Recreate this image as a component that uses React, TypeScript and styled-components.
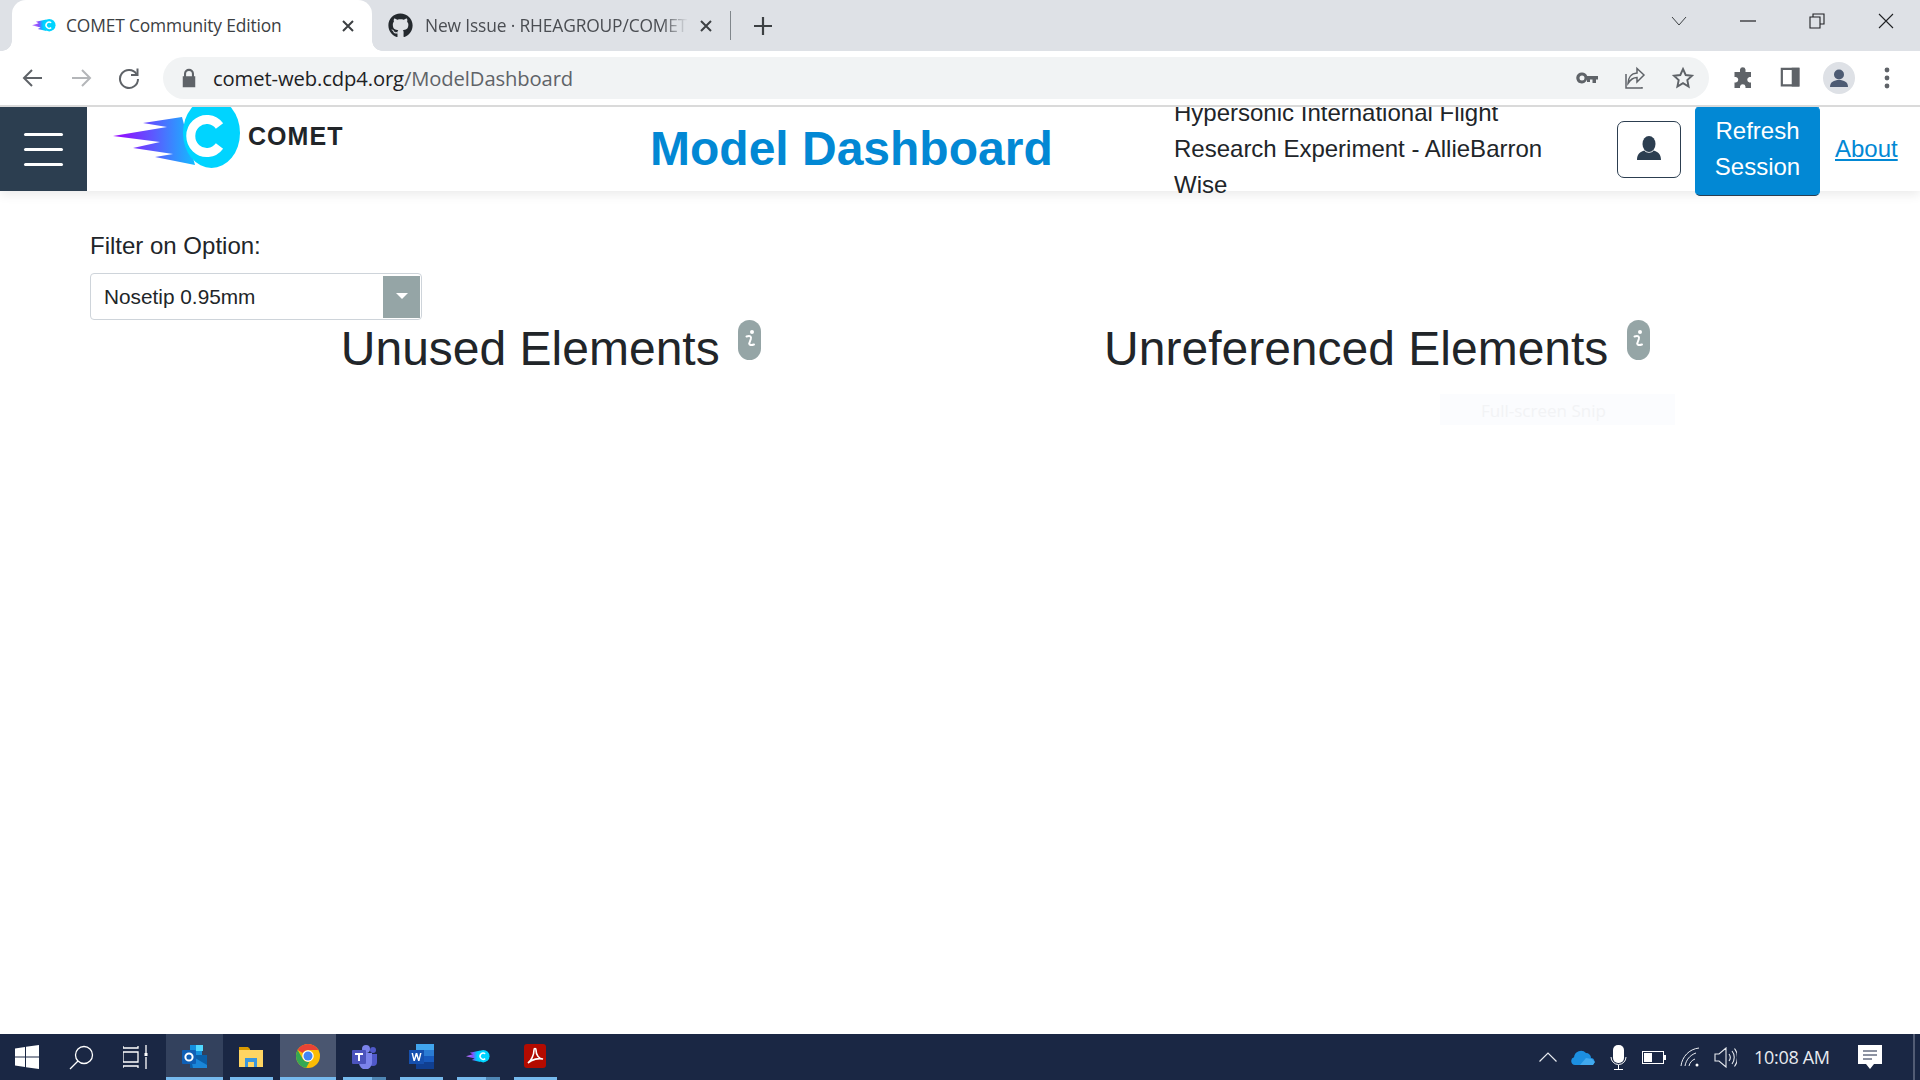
import React from "react";
import styled, { createGlobalStyle } from "styled-components";
import { FaGithub } from "react-icons/fa";

const Global = createGlobalStyle`
  html, body { margin: 0; padding: 0; background: #fff; }
  body { font-family: "Liberation Sans", Arial, sans-serif; color: #212529; }
  * { box-sizing: border-box; }
`;
const Screen = styled.div`display:flex;flex-direction:column;width:1920px;height:1080px;overflow:hidden;position:relative;`;
const Chrome = styled.header`flex:none;position:relative;z-index:5;background:#fff;font-family:"Open Sans","Noto Sans",sans-serif;`;
const TabStrip = styled.div`display:flex;align-items:stretch;height:51px;background:#dee1e6;padding-left:12px;`;
const ActiveTab = styled.div`
  position:relative;display:flex;align-items:center;width:360px;background:#fff;border-radius:14px 14px 0 0;padding:0 17px 0 20px;
  &::before,&::after{content:"";position:absolute;bottom:0;width:10px;height:10px;background:radial-gradient(circle at var(--cx) 0,#dee1e6 9.5px,#fff 10px);}
  &::before{left:-10px;--cx:0;}
  &::after{right:-10px;--cx:100%;}
`;
const InactiveTab = styled.div`display:flex;align-items:center;width:358px;padding:0 17px 0 16px;`;
const TabTitle = styled.span<{ $fade?: boolean }>`
  flex:1;margin:0 ${p => (p.$fade ? "11px" : "0")} 2px ${p => (p.$fade ? "12px" : "10px")};font-size:17.4px;letter-spacing:-.15px;white-space:nowrap;color:${p => (p.$fade ? "#4a4d52" : "#3c4043")};
  ${p => p.$fade && "-webkit-mask-image:linear-gradient(90deg,#000 90%,transparent 100%);mask-image:linear-gradient(90deg,#000 90%,transparent 100%);"}
`;
const TabSeparator = styled.div`width:1px;height:29px;background:#80868b;align-self:center;`;
const PlusSlot = styled.div`width:64px;display:flex;align-items:center;justify-content:center;`;
const WindowControls = styled.div`margin-left:auto;display:flex;align-items:flex-start;`;
const WinBtn = styled.div<{ $w: number }>`width:${p => p.$w}px;height:42px;display:flex;align-items:center;justify-content:center;`;
const Toolbar = styled.div`display:flex;align-items:center;height:56px;padding:0 9px 0 9px;background:#fff;border-bottom:2px solid #dadada;`;
const ToolBtn = styled.div`flex:none;width:48px;height:42px;display:flex;align-items:center;justify-content:center;`;
const Omnibox = styled.div`flex:1;height:42px;margin:0 10px 0 10px;padding:0 2px 0 16px;display:flex;align-items:center;background:#f1f3f4;border-radius:21px;`;
const Url = styled.div`flex:1;margin-left:14px;font-size:20.2px;letter-spacing:-.1px;color:#202124;white-space:nowrap;`;
const UrlPath = styled.span`color:#5f6368;`;

const Page = styled.main`flex:1;position:relative;min-height:0;background:#fff;`;
const Nav = styled.nav`display:flex;align-items:center;height:84px;background:#fff;box-shadow:0 4px 10px rgba(0,0,0,.08);position:relative;`;
const MenuBtn = styled.button`flex:none;width:87px;height:84px;border:0;padding:0;background:#2c3e50;display:flex;flex-direction:column;gap:12px;align-items:center;justify-content:center;`;
const Bar = styled.span`width:39px;height:3px;border-radius:2px;background:#fff;`;
const Brand = styled.div`flex:none;width:563px;height:84px;padding-left:26px;display:flex;align-items:flex-start;overflow:hidden;`;
const BrandName = styled.span`margin:11px 0 0 1px;font-size:25px;line-height:36px;font-weight:700;letter-spacing:1.05px;color:#212529;`;
const Title = styled.h1`flex:none;width:524px;margin:0;font-size:48px;line-height:58px;font-weight:700;color:#0288d4;white-space:nowrap;`;
const ProjectName = styled.div`flex:none;width:397px;height:108px;margin-top:-1px;font-size:24px;line-height:36px;color:#212529;`;
const UserBtn = styled.button`flex:none;width:64px;height:57px;margin:0 0 0 46px;padding:0 0 3px;background:#fff;border:1px solid #2c3e50;border-radius:7px;display:flex;align-items:center;justify-content:center;`;
const RefreshBtn = styled.button`flex:none;width:125px;height:90px;margin:4px 0 0 14px;padding:4px 16px 8px;background:#0288d4;border:1px solid #2c3e50;border-color:#0288d4 #0288d4 #2c3e50;border-radius:5px;color:#fff;font:24px/36px "Liberation Sans",Arial,sans-serif;`;
const AboutLink = styled.a`flex:none;margin-left:15px;font-size:24px;line-height:36px;color:#0288d4;text-decoration:underline;`;
const Filter = styled.section`padding:37px 0 0 90px;`;
const FilterLabel = styled.label`display:block;font-size:24px;line-height:36px;margin-bottom:9px;`;
const Select = styled.div`display:flex;width:332px;height:47px;padding:2px 1px 1px 0;border:1px solid #ced4da;border-radius:4px;background:#fff;`;
const SelectValue = styled.span`flex:1;padding-left:13px;font-size:20.8px;line-height:41px;`;
const SelectArrow = styled.span`width:37px;background:#95a5a6;display:flex;align-items:center;justify-content:center;`;
const Caret = styled.i`width:0;height:0;margin-bottom:3px;border:6px solid transparent;border-top-color:#fff;border-bottom:0;`;
const Columns = styled.section`display:grid;grid-template-columns:826px 826px;padding-left:138px;`;
const Column = styled.div`display:flex;justify-content:center;align-items:flex-start;gap:18.5px;`;
const Heading = styled.h2`margin:0;font-size:48px;line-height:58px;font-weight:400;color:#212529;white-space:nowrap;`;
const InfoBadge = styled.span`width:23px;height:40px;border-radius:12px;background:#95a5a6;display:flex;align-items:center;justify-content:center;`;
const Ghost = styled.div`position:absolute;left:1440px;top:287px;width:235px;height:31px;padding-left:41px;background:#fbfcfe;color:#f2f3f5;font:17px/33px "Open Sans",sans-serif;`;

const Taskbar = styled.footer`flex:none;position:relative;z-index:5;height:46px;display:flex;align-items:stretch;background:#1a2744;`;
const SysBtn = styled.div`width:54px;display:flex;align-items:center;justify-content:center;`;
const AppGap = styled.div`width:4px;`;
const AppCell = styled.div<{ $active?: boolean; $open?: boolean }>`
  position:relative;width:56.8px;display:flex;align-items:center;justify-content:center;padding-bottom:2px;
  background:${p => (p.$active ? "#4a5670" : p.$open ? "#33415d" : "transparent")};
`;
const Underline = styled.span<{ $full?: boolean; $stack?: boolean }>`
  position:absolute;bottom:0;height:3px;left:${p => (p.$full ? 0 : "7px")};right:${p => (p.$full ? 0 : "7px")};
  background:${p => (p.$stack ? "linear-gradient(90deg,#76b9ed 0 68%,#4f86b4 68% 100%)" : "#76b9ed")};
`;
const Tray = styled.div`margin-left:auto;display:flex;align-items:stretch;padding-right:5px;`;
const TraySlot = styled.div`width:35.5px;display:flex;align-items:center;justify-content:center;`;
const Clock = styled.div`width:76px;margin:0 13px 0 11px;display:flex;align-items:center;white-space:nowrap;color:#e8ebf0;font:18px "Open Sans",sans-serif;letter-spacing:-.3px;`;
const Notify = styled.div`width:54px;display:flex;align-items:center;justify-content:center;`;
const ShowDesktop = styled.div`width:18px;border-right:2px solid #525c74;`;

const Grey = "#5f6368";
const CometMini = ({ s = 26, id }: { s?: number; id: string }) => (
  <svg width={s} height={s * 0.6} viewBox="0 0 50 30">
    <defs><linearGradient id={id} x1="0" x2="1"><stop offset="0" stopColor="#c080ff" /><stop offset=".45" stopColor="#8a4cff" /><stop offset=".75" stopColor="#00c8ff" /></linearGradient></defs>
    <path d="M0 15 L14 11 L8 8 L30 3 L30 27 L12 23 L18 20 Z" fill={`url(#${id})`} />
    <circle cx="36" cy="15" r="13" fill="#00d4ff" />
    <path d="M40 10 A6.5 6.5 0 1 0 40 20" fill="none" stroke="#fff" strokeWidth="3" />
  </svg>
);
const Logo = () => (
  <svg width="134" height="84" viewBox="113 107 134 84">
    <defs><linearGradient id="lg" x1="113" x2="205" y1="0" y2="0" gradientUnits="userSpaceOnUse"><stop offset="0" stopColor="#9c00ff" /><stop offset=".45" stopColor="#5a5cff" /><stop offset="1" stopColor="#00d4ff" /></linearGradient></defs>
    <path d="M113 136 L167 127 L143 123 L182 117 L195 165 L155 157 L173 154 L133 148 L160 142 Z" fill="url(#lg)" />
    <ellipse cx="211.5" cy="133" rx="28.5" ry="35" fill="#00d4ff" />
    <path d="M219.5 126 A16 16.5 0 1 0 219.5 146" fill="none" stroke="#fff" strokeWidth="9" />
  </svg>
);
const InfoGlyph = () => (
  <svg width="12" height="22" viewBox="0 0 12 22" fill="none">
    <circle cx="8" cy="3" r="2" fill="#fff" />
    <path d="M2.500 7.500Q8 6 6.800 10L5.200 14.500Q5.500 16.800 10 15.500" stroke="#fff" strokeWidth="2" strokeLinecap="round" />
  </svg>
);
const Stroke = ({ w = 24, h = 24, vb = "0 0 24 24", c = Grey, sw = 2, children }: any) => (
  <svg width={w} height={h} viewBox={vb} fill="none" stroke={c} strokeWidth={sw}>{children}</svg>
);
const Fill = ({ w = 24, h = 24, vb = "0 0 24 24", c = Grey, children }: any) => (
  <svg width={w} height={h} viewBox={vb} fill={c}>{children}</svg>
);

const apps = [
  { key: "o", open: true, full: true, icon: (
    <svg width="25" height="25" viewBox="0 0 25 25"><path d="M8 1h12v12H8z" fill="#1490df" /><path d="M14 1h7v6h-7z" fill="#50d9ff" /><path d="M8 11h17v13H8z" fill="#0a5ea8" /><path d="M8 11l17 10v3H11z" fill="#1a86d8" /><rect y="6" width="14" height="14" rx="1" fill="#0f5fb5" /><circle cx="7" cy="13" r="3.6" fill="none" stroke="#fff" strokeWidth="2" /></svg>) },
  { key: "f", icon: (
    <svg width="24" height="22" viewBox="0 0 24 22"><path d="M0 2h9l2 2v4H0z" fill="#d99a00" /><path d="M0 5h24v17H0z" fill="#ffd562" /><path d="M6 13h12v9h-3v-5H9v5H6z" fill="#3a96dd" /></svg>) },
  { key: "c", active: true, full: true, icon: (
    <svg width="24" height="24" viewBox="0 0 48 48"><circle cx="24" cy="24" r="24" fill="#fbbc04" /><path d="M24 0a24 24 0 0 1 20.8 12H24a12 12 0 0 0-10.4 6L3.2 12A24 24 0 0 1 24 0z" fill="#ea4335" /><path d="M3.2 12l10.4 18A12 12 0 0 0 27 35.6L20.4 47.7A24 24 0 0 1 3.2 12z" fill="#34a853" /><circle cx="24" cy="24" r="11.5" fill="#fff" /><circle cx="24" cy="24" r="9" fill="#4285f4" /></svg>) },
  { key: "t", stack: true, icon: (
    <svg width="25" height="25" viewBox="0 0 25 25"><circle cx="14" cy="5" r="4" fill="#7b83eb" /><circle cx="21" cy="6" r="3" fill="#5059c9" /><path d="M17 10h8v8a4 4 0 0 1-8 0z" fill="#5059c9" /><path d="M7 9h13v10a6 6 0 0 1-13 0z" fill="#7b83eb" /><rect y="6" width="14" height="14" rx="1" fill="#4b53bc" /><path d="M3 9h8v2H8v6H6v-6H3z" fill="#fff" /></svg>) },
  { key: "w", icon: (
    <svg width="25" height="25" viewBox="0 0 25 25"><path d="M7 0h18v25H7z" fill="#185abd" /><path d="M7 0h18v6H7z" fill="#41a5ee" /><path d="M7 6h18v6H7z" fill="#2b7cd3" /><path d="M7 18h18v7H7z" fill="#103f91" /><rect y="6" width="15" height="14" fill="#1650ae" /><path d="M2.5 9l2 8h1.4l1.6-5 1.6 5h1.4l2-8h-1.5l-1.2 5.5L8.3 9H6.700l-1.500 5.500L4 9z" fill="#fff" /></svg>) },
  { key: "m", stack: true, icon: <CometMini s={24} id="cmtask" /> },
  { key: "a", icon: (
    <svg width="22" height="24" viewBox="0 0 22 24"><rect width="22" height="24" rx="3" fill="#b30b00" /><path d="M4 19c3-2 6-8 6-13 0-2 2-2 2 0 0 5 3 9 7 9-4-1-11 0-15 4z" fill="none" stroke="#fff" strokeWidth="1.6" /></svg>) },
];

export default function App() {
  return (
    <Screen>
      <Global />
      <Chrome>
        <TabStrip>
          <ActiveTab>
            <CometMini s={24} id="cmtab" />
            <TabTitle>COMET Community Edition</TabTitle>
            <Stroke w={14} h={14} vb="0 0 14 14" c="#3c4043" sw={2}><path d="M2 2l10 10M12 2L2 12" /></Stroke>
          </ActiveTab>
          <InactiveTab>
            <FaGithub size={25} color="#24292e" />
            <TabTitle $fade>New Issue · RHEAGROUP/COMET</TabTitle>
            <Stroke w={14} h={14} vb="0 0 14 14" c="#3c4043" sw={2}><path d="M2 2l10 10M12 2L2 12" /></Stroke>
          </InactiveTab>
          <TabSeparator />
          <PlusSlot><Stroke w={20} h={20} vb="0 0 20 20" c="#3c4043" sw={2.2}><path d="M10 1v18M1 10h18" /></Stroke></PlusSlot>
          <WindowControls>
            <WinBtn $w={68}><Stroke w={16} h={10} vb="0 0 16 10" c="#3c4043" sw={1}><path d="M1 1l7 8 7-8" /></Stroke></WinBtn>
            <WinBtn $w={69}><Stroke w={16} h={2} vb="0 0 16 2" c="#202124" sw={1.2}><path d="M0 1h16" /></Stroke></WinBtn>
            <WinBtn $w={69}><Stroke w={16} h={16} vb="0 0 16 16" c="#202124" sw={1.1}><path d="M1 4h10v11H1zM4 4V1h11v10h-4" /></Stroke></WinBtn>
            <WinBtn $w={69}><Stroke w={16} h={16} vb="0 0 16 16" c="#202124" sw={1.1}><path d="M1 1l14 14M15 1L1 15" /></Stroke></WinBtn>
          </WindowControls>
        </TabStrip>
        <Toolbar>
          <ToolBtn><Stroke c="#5f6368"><path d="M21 12H4M11 4l-8 8 8 8" /></Stroke></ToolBtn>
          <ToolBtn><Stroke c="#b4b6b9"><path d="M3 12h17M13 4l8 8-8 8" /></Stroke></ToolBtn>
          <ToolBtn><Stroke c="#5f6368"><path d="M19.5 8A9 9 0 1 0 21 13" /><path d="M20.5 2.5V9H14" fill="none" /></Stroke></ToolBtn>
          <Omnibox>
            <Fill w={20} h={20}><path d="M6 10V7a6 6 0 0 1 12 0v3h1.5v13h-15V10zm2.5 0h7V7a3.5 3.5 0 0 0-7 0z" /></Fill>
            <Url>comet-web.cdp4.org<UrlPath>/ModelDashboard</UrlPath></Url>
            <ToolBtn><Fill w={24} h={24}><path fillRule="evenodd" d="M7 6.5a5.5 5.5 0 0 1 5.2 3.5H23v3.5h-2V17h-3.5v-3.5H15V16h-3v-2.4A5.5 5.5 0 1 1 7 6.5zm0 3a2.5 2.5 0 1 0 0 5 2.5 2.5 0 0 0 0-5z" /></Fill></ToolBtn>
            <ToolBtn><Stroke c="#5f6368" sw={1.5}><path d="M21 9l-7-6.5V7C8 7.5 5 12 5 17.5 7.5 13.500 10 11.500 14 11.500V16z" /><path d="M3 8v14h16v-1" /></Stroke></ToolBtn>
            <ToolBtn><Stroke c="#5f6368" sw={1.9}><path d="M12 3l2.7 6 6.300.7-4.700 4.300 1.300 6.500L12 17.200 6.400 20.500l1.300-6.500L3 9.700 9.300 9z" /></Stroke></ToolBtn>
          </Omnibox>
          <ToolBtn><Fill w={24} h={24}><path d="M9 3.500a2.800 2.800 0 0 1 5.500 0V6H20v5h-1.500a2.800 2.800 0 0 0 0 5.500H20V22h-5.500v-1.500a2.800 2.800 0 0 0-5.500 0V22H3.500v-5.500H5a2.800 2.800 0 0 0 0-5.500H3.500V6H9z" /></Fill></ToolBtn>
          <ToolBtn><Stroke c="#5f6368" sw={2.4} w={22} h={22}><path d="M2 2h18v18H2z" /><path d="M14 2h6v18h-6z" fill="#5f6368" /></Stroke></ToolBtn>
          <ToolBtn>
            <svg width="32" height="32" viewBox="0 0 32 32"><circle cx="16" cy="16" r="16" fill="#dee1e6" /><circle cx="16" cy="12.500" r="5" fill="#4d5b73" /><path d="M7 25c0-5 4-7 9-7s9 2 9 7z" fill="#4d5b73" /></svg>
          </ToolBtn>
          <ToolBtn><Fill w={6} h={22} vb="0 0 6 22"><circle cx="3" cy="3" r="2.400" /><circle cx="3" cy="11" r="2.400" /><circle cx="3" cy="19" r="2.400" /></Fill></ToolBtn>
        </Toolbar>
      </Chrome>
      <Page>
        <Nav>
          <MenuBtn aria-label="menu"><Bar /><Bar /><Bar /></MenuBtn>
          <Brand><Logo /><BrandName>COMET</BrandName></Brand>
          <Title>Model Dashboard</Title>
          <ProjectName>Hypersonic International Flight Research Experiment - AllieBarron Wise</ProjectName>
          <UserBtn aria-label="user">
            <Fill w={24} h={24} c="#2c3e50"><ellipse cx="12" cy="8" rx="6.500" ry="8" /><path d="M0 24C0 18 3 16 7.500 14.500 9 17.500 15 17.500 16.500 14.500 21 16 24 18 24 24Z" /></Fill>
          </UserBtn>
          <RefreshBtn>Refresh Session</RefreshBtn>
          <AboutLink href="#">About</AboutLink>
        </Nav>
        <Filter>
          <FilterLabel>Filter on Option:</FilterLabel>
          <Select><SelectValue>Nosetip 0.95mm</SelectValue><SelectArrow><Caret /></SelectArrow></Select>
        </Filter>
        <Columns>
          <Column><Heading>Unused Elements</Heading><InfoBadge><InfoGlyph /></InfoBadge></Column>
          <Column><Heading>Unreferenced Elements</Heading><InfoBadge><InfoGlyph /></InfoBadge></Column>
        </Columns>
        <Ghost>Full-screen Snip</Ghost>
      </Page>
      <Taskbar>
        <SysBtn><Fill w={24} h={24} c="#fff"><path d="M0 3.500L10 2v9.500H0zM11 1.800L24 0v11.500H11zM0 12.500h10V22L0 20.500zM11 12.500h13V24l-13-1.800z" /></Fill></SysBtn>
        <SysBtn><Stroke w={25} h={25} vb="0 0 25 25" c="#fff" sw={1.3}><circle cx="15" cy="10" r="8.500" /><path d="M9 16L1 24" /></Stroke></SysBtn>
        <SysBtn><Stroke w={25} h={24} vb="0 0 25 24" c="#fff" sw={1.300}><path d="M0 1v2h15V1M0 7h15v10H0zM0 23v-2h15v2M23 0v8M23 12v12" /><rect x="21.500" y="8" width="3" height="3" fill="#fff" stroke="none" /></Stroke></SysBtn>
        <AppGap />
        {apps.map(a => (
          <AppCell key={a.key} $active={a.active} $open={a.open}>
            {a.icon}
            <Underline $full={a.full} $stack={a.stack} />
          </AppCell>
        ))}
        <Tray>
          <TraySlot><Stroke w={18} h={10} vb="0 0 18 10" c="#e8ebf0" sw={1.200}><path d="M0.500 9.500L9 1l8.500 8.500" /></Stroke></TraySlot>
          <TraySlot><svg width="24" height="16" viewBox="0 0 24 16"><path d="M4 16a4 4 0 0 1-1-7.800A7 7 0 0 1 15 4a5 5 0 0 1 5 5 3.600 3.600 0 0 1 1 7z" fill="#1c8fe0" /><path d="M9 16l6-7 6 1 3 3-2 3z" fill="#41a9ee" /></svg></TraySlot>
          <TraySlot>
            <svg width="17" height="25" viewBox="0 0 17 25"><rect x="3" y="0" width="11" height="18" rx="5" fill="#fff" /><path d="M1 12a7.500 7.500 0 0 0 15 0M8.500 20v4M4 24.500h9" fill="none" stroke="#fff" /></svg>
          </TraySlot>
          <TraySlot><svg width="24" height="13" viewBox="0 0 24 13"><rect x=".5" y=".5" width="21" height="12" fill="none" stroke="#fff" /><rect x="2" y="2" width="8" height="9" fill="#fff" /><rect x="22" y="4" width="2" height="5" fill="#fff" /></svg></TraySlot>
          <TraySlot><Stroke w={20} h={20} vb="0 0 20 20" c="#e8ebf0" sw={1}><path d="M1 19C2 10 9 2 19 1M5 19c1-6 5-11 11-13M9 19c.5-3 3-6 6-7" /><circle cx="17" cy="18" r="1.500" fill="#fff" stroke="none" /></Stroke></TraySlot>
          <TraySlot><Stroke w={23} h={21} vb="0 0 23 21" c="#e8ebf0" sw={1.100}><path d="M1 7v7h4l7 6V1L5 7zM15 7c1.500 2 1.500 5 0 7M18 4c3 3.500 3 9 0 13M20.500 1.500c4 5 4 13 0 18" /></Stroke></TraySlot>
          <Clock>10:08 AM</Clock>
          <Notify><svg width="24" height="24" viewBox="0 0 24 24"><path d="M0 0h24v19h-8l-4 5-4-5H0z" fill="#fff" /><path d="M5 6h14M5 10h14M5 14h9" stroke="#1a2744" strokeWidth="1" /></svg></Notify>
          <ShowDesktop />
        </Tray>
      </Taskbar>
    </Screen>
  );
}
